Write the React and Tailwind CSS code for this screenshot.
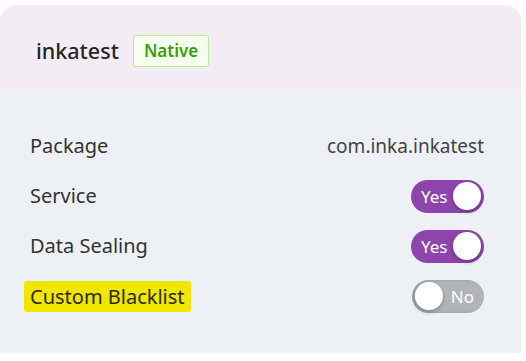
import React from 'react';

const font = { fontFamily: '"Noto Sans", "Open Sans", sans-serif' };

const Toggle = ({ on }) => {
    if (on) {
        return (
            <div className="flex items-center justify-between w-[73px] h-[33px] rounded-full bg-[#8e44ad] pl-[10px] pr-[3px]">
                <span className="text-[17px] text-white leading-none">Yes</span>
                <span className="w-[28px] h-[28px] rounded-full bg-white shadow-[0_2px_4px_rgba(0,0,0,0.25)]"></span>
            </div>
        );
    }
    return (
        <div className="flex items-center justify-between w-[72px] h-[33px] rounded-full bg-[#b3b4b7] pl-[3px] pr-[10px] shadow-[inset_2px_0_3px_rgba(0,0,0,0.15)]">
            <span className="w-[28px] h-[28px] rounded-full bg-white shadow-[0_2px_4px_rgba(0,0,0,0.25)]"></span>
            <span className="text-[17px] text-white leading-none">No</span>
        </div>
    );
};

const Row = ({ label, children, marked }) => (
    <div className="flex items-center justify-between h-[50px]">
        {marked ? (
            <span className="text-[20px] leading-[27px] text-[#2a2a1a] bg-[#f0e600] -ml-[6px] px-[6px] py-[2px] rounded-[3px]">{label}</span>
        ) : (
            <span className="text-[20px] text-[#333]">{label}</span>
        )}
        {children}
    </div>
);

export default function App() {
    return (
        <div className="w-[526px] h-[361px] bg-white pt-[5px]" style={font}>
            <div className="w-[521px] h-[348px] rounded-t-[16px] overflow-hidden flex flex-col">
                <div className="h-[86px] bg-[#f4ecf4] flex items-center pl-[36px] pt-[6px] gap-[14px] shrink-0">
                    <span className="text-[21.5px] font-medium text-[#262626]">inkatest</span>
                    <span className="h-[32px] px-[10px] flex items-center border border-[#b7eb8f] bg-[#f6ffed] text-[#389e0d] text-[17px] font-semibold rounded-[3px]">Native</span>
                </div>
                <div className="flex-1 bg-[#edf0f4] pl-[30px] pr-[37px] pt-[30px]">
                    <Row label="Package">
                        <span className="text-[19px] text-[#444]">com.inka.inkatest</span>
                    </Row>
                    <Row label="Service">
                        <Toggle on />
                    </Row>
                    <Row label="Data Sealing">
                        <Toggle on />
                    </Row>
                    <Row label="Custom Blacklist" marked>
                        <Toggle on={false} />
                    </Row>
                </div>
            </div>
        </div>
    );
}
